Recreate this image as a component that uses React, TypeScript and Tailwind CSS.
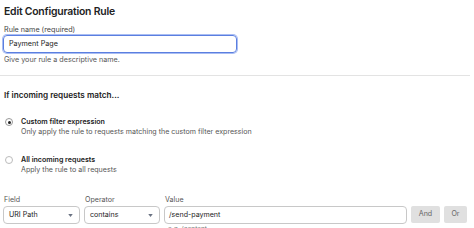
import React from "react";

const font = { fontFamily: "Inter, 'Liberation Sans', sans-serif" };

function Chevron() {
  return (
    <svg width="5" height="3" viewBox="0 0 6 4" className="text-gray-500">
      <path d="M0 0h6L3 4z" fill="currentColor" />
    </svg>
  );
}

export default function App() {
  return (
    <div className="w-[474px] h-[228px] overflow-hidden bg-white text-[#222]" style={font}>
      <div className="pl-[4px] pt-[5px]">
        <h1 className="text-[10.4px] leading-[14px] font-semibold tracking-[-0.2px]">Edit Configuration Rule</h1>

        <label className="block mt-[6px] text-[7.2px] leading-[9px] text-[#444]">Rule name (required)</label>
        <div className="mt-[1px] w-[234px] h-[18px] -ml-[1px] rounded-[4px] border border-[#5b7fe0] ring-1 ring-[#a9bdf3] flex items-center pl-[5px]">
          <span className="text-[7.2px] text-[#222]">Payment Page</span>
        </div>
        <p className="mt-[2px] text-[7.2px] leading-[9px] text-[#555]">Give your rule a descriptive name.</p>
      </div>

      <div className="mt-[11px] mr-[4px] h-px bg-[#e3e3e3]" />

      <div className="pl-[4px]">
        <h2 className="mt-[14px] text-[8.2px] leading-[10px] font-semibold">If incoming requests match...</h2>

        <div className="mt-[17px] flex items-start">
          <div className="ml-[1px] mt-[1px] w-[8px] h-[8px] rounded-full border border-[#999] flex items-center justify-center">
            <div className="w-[3px] h-[3px] rounded-full bg-[#222]" />
          </div>
          <div className="ml-[8px]">
            <div className="text-[7.1px] leading-[10px] font-semibold">Custom filter expression</div>
            <div className="text-[7.1px] leading-[10px] text-[#555]">Only apply the rule to requests matching the custom filter expression</div>
          </div>
        </div>

        <div className="mt-[18px] flex items-start">
          <div className="ml-[1px] mt-[1px] w-[8px] h-[8px] rounded-full border border-[#bbb]" />
          <div className="ml-[8px]">
            <div className="text-[7.1px] leading-[10px] font-semibold">All incoming requests</div>
            <div className="text-[7.1px] leading-[10px] text-[#555]">Apply the rule to all requests</div>
          </div>
        </div>

        <div className="mt-[20px] flex items-start gap-[4px] -ml-[1px]">
          <div className="w-[77px]">
            <div className="pl-[1px] text-[7.1px] leading-[9px] text-[#555]">Field</div>
            <div className="mt-[2px] h-[18px] rounded-[4px] border border-[#c8c8c8] flex items-center justify-between pl-[5px] pr-[6px]">
              <span className="text-[7.1px]">URI Path</span>
              <Chevron />
            </div>
          </div>
          <div className="w-[76px]">
            <div className="pl-[1px] text-[7.1px] leading-[9px] text-[#555]">Operator</div>
            <div className="mt-[2px] h-[18px] rounded-[4px] border border-[#c8c8c8] flex items-center justify-between pl-[5px] pr-[6px]">
              <span className="text-[7.1px]">contains</span>
              <Chevron />
            </div>
          </div>
          <div className="w-[243px]">
            <div className="pl-[1px] text-[7.1px] leading-[9px] text-[#555]">Value</div>
            <div className="mt-[2px] h-[18px] rounded-[4px] border border-[#c8c8c8] flex items-center pl-[4px]">
              <span className="text-[7.1px]">/send-payment</span>
            </div>
            <div className="mt-[1px] pl-[4px] text-[6.5px] leading-[8px] text-[#777]">e.g. /content</div>
          </div>
          <div className="mt-[11px] flex gap-[4px]">
            <button className="w-[29px] h-[17px] rounded-[2px] bg-[#e0e0e0] text-[7.1px] text-[#666]">And</button>
            <button className="w-[23px] h-[17px] rounded-[2px] bg-[#e0e0e0] text-[7.1px] text-[#666]">Or</button>
          </div>
        </div>
      </div>
    </div>
  );
}
